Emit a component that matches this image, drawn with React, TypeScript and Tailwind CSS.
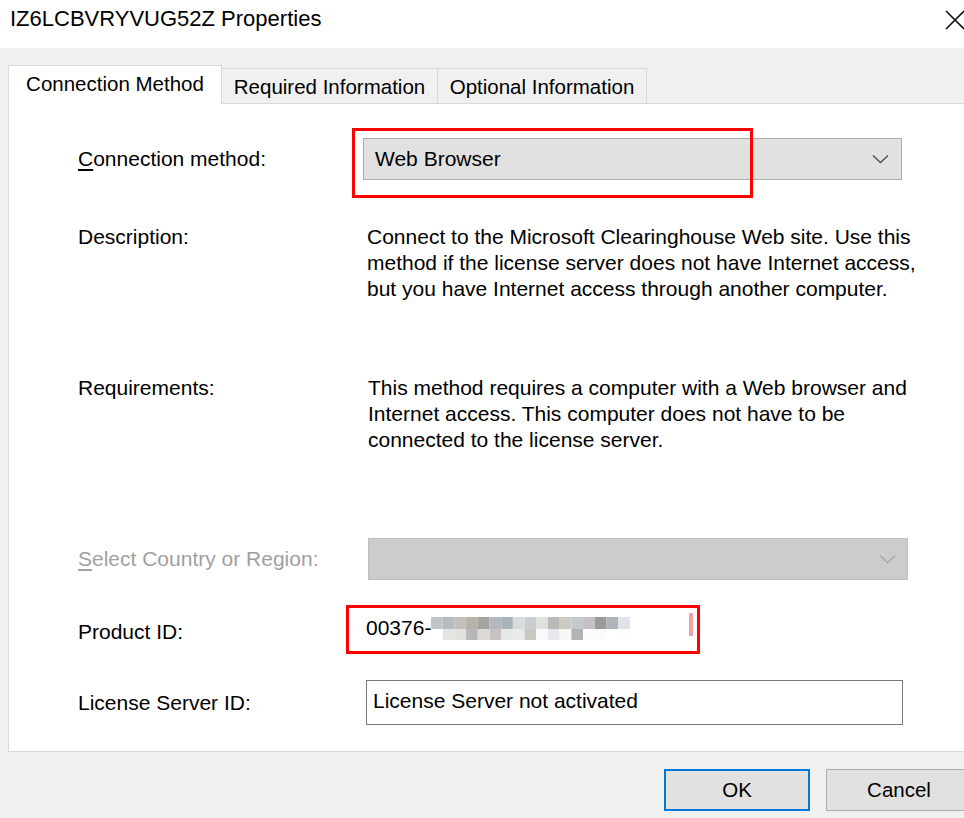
import React from "react";

const blurTop = [
  "#c0c4c7", "#b5bcc0", "#c6c1b8", "#b7b3ab", "#a3a3a0", "#b3b9bd", "#a9b3bb", "#d9dcdd", "#c9ced1",
  "#e0e0dd", "#b9b9b6", "#cdcbc1", "#c2c8cc", "#c8bfc4", "#9a9a9a", "#b0b4b8", "#dfe3ea",
];
const blurBottom = [
  "#ffffff", "#e4e4e4", "#e2e1de", "#b7b7b5", "#dcdad6", "#c8c3c0", "#e6e8ea", "#e9eaea", "#cac6c0",
  "#fafafa", "#e6e8ec", "#f7f7f7", "#b3b3b3", "#fbfbfb", "#fcfcfc", "#ffffff", "#fdfdfd",
];

function Chevron({ color }: { color: string }) {
  return (
    <svg width="17" height="10" viewBox="0 0 17 10">
      <polyline points="1,1.5 8.5,8.5 16,1.5" fill="none" stroke={color} strokeWidth="1.4" />
    </svg>
  );
}

function Row({ label, children, disabled }: { label: React.ReactNode; children: React.ReactNode; disabled?: boolean }) {
  return (
    <div className="flex items-start">
      <div className={`w-[285px] shrink-0 text-[21px] leading-[26px] ${disabled ? "text-[#a0a0a0]" : "text-black"}`}>
        {label}
      </div>
      <div className="flex-1">{children}</div>
    </div>
  );
}

export default function App() {
  return (
    <div className="w-[964px] h-[818px] overflow-hidden bg-[#f0f0f0] font-['Liberation_Sans',Arial,sans-serif] text-black">
      {/* title bar */}
      <div className="h-[48px] bg-white flex items-start justify-between pl-[10px] pt-[6px]">
        <span className="text-[22px] leading-[26px]">IZ6LCBVRYVUG52Z Properties</span>
        <svg width="20" height="20" viewBox="0 0 20 20" className="mt-[4px] mr-[-1px]">
          <path d="M1 1 L19 19 M19 1 L1 19" stroke="#111" strokeWidth="1.6" />
        </svg>
      </div>

      {/* tabs */}
      <div className="pt-[17px] pl-[8px] flex items-end text-[20.5px]">
        <div className="relative z-10 mb-[-1px] w-[214px] h-[39px] bg-white border border-b-0 border-[#d9d9d9] flex items-center justify-center pb-[2px]">
          Connection Method
        </div>
        <div className="w-[216px] h-[35px] border-t border-r border-[#d9d9d9] flex items-center justify-center pt-[3px]">
          Required Information
        </div>
        <div className="w-[209px] h-[35px] border-t border-r border-[#d9d9d9] flex items-center justify-center pt-[3px]">
          Optional Information
        </div>
      </div>

      {/* panel */}
      <div className="ml-[8px] w-[980px] bg-white border border-[#d9d9d9] pl-[69px] pt-[34px] pb-[26px]">
        <Row label={<span className="flex h-[42px] items-center"><span><span className="underline underline-offset-[3px]">C</span>onnection method:</span></span>}>
          <div className="relative w-[539px]">
            <div className="h-[42px] bg-[#e1e1e1] border border-[#adadad] flex items-center justify-between pl-[11px] pr-[12px] text-[21px]">
              <span>Web Browser</span>
              <Chevron color="#4d4d4d" />
            </div>
            <div className="absolute left-[-11px] top-[-10px] w-[401px] h-[70px] border-[3px] border-[#ff0000]" />
          </div>
        </Row>

        <div className="mt-[44px]">
          <Row label="Description:">
            <p className="ml-[4px] text-[21px] leading-[26px]">
              Connect to the Microsoft Clearinghouse Web site. Use this
              <br />
              method if the license server does not have Internet access,
              <br />
              but you have Internet access through another computer.
            </p>
          </Row>
        </div>

        <div className="mt-[73px]">
          <Row label="Requirements:">
            <p className="ml-[5px] text-[21px] leading-[26px]">
              This method requires a computer with a Web browser and
              <br />
              Internet access. This computer does not have to be
              <br />
              connected to the license server.
            </p>
          </Row>
        </div>

        <div className="mt-[85px]">
          <Row
            disabled
            label={<span className="flex h-[42px] items-center"><span><span className="underline underline-offset-[3px]">S</span>elect Country or Region:</span></span>}
          >
            <div className="ml-[5px] w-[540px] h-[42px] bg-[#cccccc] border border-[#bfbfbf] flex items-center justify-end pr-[11px]">
              <Chevron color="#a8a8a8" />
            </div>
          </Row>
        </div>

        <div className="mt-[39px]">
          <Row label="Product ID:">
            <div className="relative ml-[3px] h-[26px]">
              <div className="flex items-start mt-[-4px] text-[21px] leading-[26px]">
                <span>00376-</span>
                <svg width="200" height="24" viewBox="0 0 200 24" className="mt-[2px]">
                  {blurTop.map((c, i) => (
                    <rect key={"t" + i} x={i * 11.7} y={0} width={11.7} height={12} fill={c} />
                  ))}
                  {blurBottom.map((c, i) => (
                    <rect key={"b" + i} x={i * 11.7} y={12} width={11.7} height={11} fill={c} />
                  ))}
                </svg>
              </div>
              <div className="absolute left-[323px] top-[-2px] w-[4px] h-[23px] bg-[#f4a0a6]" />
              <div className="absolute left-[-20px] top-[-10px] w-[354px] h-[49px] border-[3px] border-[#ff0000]" />
            </div>
          </Row>
        </div>

        <div className="mt-[35px]">
          <Row label={<span className="flex h-[45px] items-center">License Server ID:</span>}>
            <div className="ml-[3px] w-[537px] h-[45px] border border-[#7a7a7a] bg-white flex items-center pl-[6px] pb-[4px] text-[21px]">
              License Server not activated
            </div>
          </Row>
        </div>
      </div>

      {/* buttons */}
      <div className="w-[972px] flex justify-end gap-[16px] pt-[17px] text-[20.5px]">
        <button className="w-[146px] h-[42px] bg-[#e1e1e1] border-2 border-[#0078d7]">OK</button>
        <button className="w-[146px] h-[42px] bg-[#e1e1e1] border border-[#adadad]">Cancel</button>
      </div>
    </div>
  );
}
